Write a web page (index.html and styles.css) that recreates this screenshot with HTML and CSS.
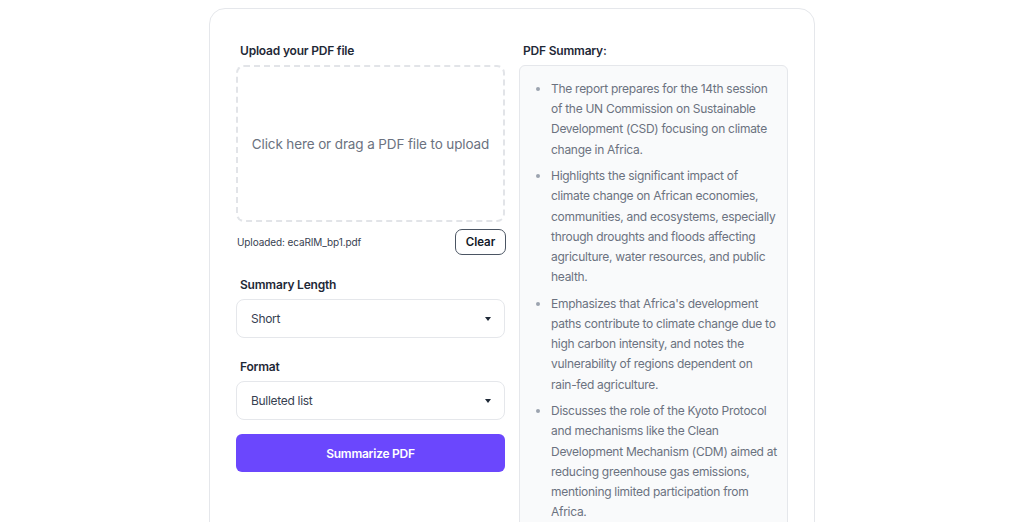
FILE: index.html
```html
<!DOCTYPE html>
<html lang="en">
<head>
<meta charset="utf-8">
<title>PDF Summarizer</title>
<link rel="stylesheet" href="styles.css">
</head>
<body>
<main class="card">
  <section class="col">
    <div class="label">Upload your PDF file</div>
    <div class="dropzone">Click here or drag a PDF file to upload</div>
    <div class="file-row">
      <span class="file-name">Uploaded: ecaRIM_bp1.pdf</span>
      <button class="clear-btn">Clear</button>
    </div>
    <div class="field">
      <div class="label">Summary Length</div>
      <div class="select"><span>Short</span><span class="caret"></span></div>
    </div>
    <div class="field">
      <div class="label">Format</div>
      <div class="select"><span>Bulleted list</span><span class="caret"></span></div>
    </div>
    <button class="primary-btn">Summarize PDF</button>
  </section>
  <section class="col">
    <div class="label">PDF Summary:</div>
    <div class="summary">
      <ul>
        <li>The report prepares for the 14th session of the UN Commission on Sustainable Development (CSD) focusing on climate change in Africa.</li>
        <li>Highlights the significant impact of climate change on African economies, communities, and ecosystems, especially through droughts and floods affecting agriculture, water resources, and public health.</li>
        <li>Emphasizes that Africa's development paths contribute to climate change due to high carbon intensity, and notes the vulnerability of regions dependent on rain-fed agriculture.</li>
        <li>Discusses the role of the Kyoto Protocol and mechanisms like the Clean Development Mechanism (CDM) aimed at reducing greenhouse gas emissions, mentioning limited participation from Africa.</li>
      </ul>
    </div>
  </section>
</main>
</body>
</html>
```

FILE: styles.css
```css
* { box-sizing: border-box; }
html, body { margin: 0; padding: 0; background: #ffffff; }
body {
  font-family: Inter, "Noto Sans", "Liberation Sans", sans-serif;
  color: #1f2937;
  height: 522px;
  overflow: hidden;
}
.card {
  width: 606px;
  margin: 8px auto 0;
  border: 1px solid #e5e7eb;
  border-radius: 16px;
  padding: 31px 26px 40px;
  display: grid;
  grid-template-columns: 269px 269px;
  column-gap: 14px;
  align-items: start;
}
.col { display: flex; flex-direction: column; }
.label {
  font-size: 12px;
  font-weight: 600;
  letter-spacing: -0.2px;
  line-height: 20px;
  color: #1f2937;
  padding: 1px 4px 0;
  margin-bottom: 4px;
}
.dropzone {
  height: 157px;
  border: 2px dashed #e2e4e8;
  border-radius: 8px;
  display: flex;
  align-items: center;
  justify-content: center;
  font-size: 13.5px;
  letter-spacing: -0.12px;
  color: #6b7280;
}
.file-row {
  margin-top: 7px;
  display: flex;
  align-items: center;
  justify-content: space-between;
  height: 26px;
}
.file-name { font-size: 10px; letter-spacing: -0.1px; color: #374151; padding-left: 1px; }
.clear-btn {
  height: 26px;
  width: 51px;
  margin-right: -1px;
  border: 1px solid #4b5563;
  border-radius: 7px;
  background: #fff;
  font-family: inherit;
  font-size: 11.5px;
  font-weight: 600;
  color: #111827;
  padding: 0;
}
.field { margin-top: 19px; display: flex; flex-direction: column; }
.field + .field { margin-top: 18px; }
.select {
  height: 39px;
  border: 1px solid #e5e7eb;
  border-radius: 8px;
  display: flex;
  align-items: center;
  justify-content: space-between;
  padding: 0 13px 0 14px;
  font-size: 12px;
  letter-spacing: -0.3px;
  color: #374151;
}
.caret {
  width: 0; height: 0;
  border-left: 3.5px solid transparent;
  border-right: 3.5px solid transparent;
  border-top: 4px solid #1f2937;
}
.primary-btn {
  margin-top: 14px;
  height: 38px;
  border: none;
  border-radius: 6px;
  background: #6b47fd;
  color: #ffffff;
  font-family: inherit;
  font-size: 12px;
  font-weight: 600;
  letter-spacing: -0.25px;
}
.summary {
  background: #f9fafb;
  border: 1px solid #e5e7eb;
  border-radius: 6px;
  padding: 13px 8px 12px 12px;
  min-height: 500px;
}
.summary ul { margin: 0; padding-left: 19px; }
.summary li {
  font-size: 12px;
  letter-spacing: -0.28px;
  line-height: 20.2px;
  color: #6b7280;
  margin-bottom: 6.4px;
}
.summary li::marker { color: #9ca3af; }
```
